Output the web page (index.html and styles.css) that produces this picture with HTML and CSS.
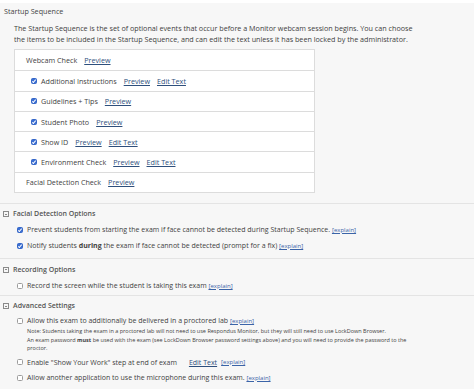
FILE: index.html
```html
<!DOCTYPE html>
<html>
<head>
<meta charset="utf-8">
<link rel="stylesheet" href="styles.css">
</head>
<body>
<div class="page">
  <section class="startup">
    <div class="title">Startup Sequence</div>
    <p class="desc">The Startup Sequence is the set of optional events that occur before a Monitor webcam session begins. You can choose<br>the items to be included in the Startup Sequence, and can edit the text unless it has been locked by the administrator.</p>
    <div class="seq">
      <div class="row plain"><span>Webcam Check</span><a href="#">Preview</a></div>
      <div class="row"><span class="cb on"></span><span>Additional Instructions</span><a href="#">Preview</a><a href="#">Edit Text</a></div>
      <div class="row"><span class="cb on"></span><span>Guidelines + Tips</span><a href="#">Preview</a></div>
      <div class="row"><span class="cb on"></span><span>Student Photo</span><a href="#">Preview</a></div>
      <div class="row"><span class="cb on"></span><span>Show ID</span><a href="#">Preview</a><a href="#">Edit Text</a></div>
      <div class="row"><span class="cb on"></span><span>Environment Check</span><a href="#">Preview</a><a href="#">Edit Text</a></div>
      <div class="row plain"><span>Facial Detection Check</span><a href="#">Preview</a></div>
    </div>
  </section>

  <section class="opt facial">
    <div class="head"><span class="tog"></span>Facial Detection Options</div>
    <div class="item"><span class="cb on"></span><span>Prevent students from starting the exam if face cannot be detected during Startup Sequence. <a class="ex" href="#">[explain]</a></span></div>
    <div class="item"><span class="cb on"></span><span>Notify students <b>during</b> the exam if face cannot be detected (prompt for a fix) <a class="ex" href="#">[explain]</a></span></div>
  </section>

  <section class="opt rec">
    <div class="head"><span class="tog"></span>Recording Options</div>
    <div class="item"><span class="cb"></span><span>Record the screen while the student is taking this exam <a class="ex" href="#">[explain]</a></span></div>
  </section>

  <section class="opt adv">
    <div class="head"><span class="tog"></span>Advanced Settings</div>
    <div class="item"><span class="cb"></span><span>Allow this exam to additionally be delivered in a proctored lab <a class="ex" href="#">[explain]</a></span></div>
    <p class="note">Note: Students taking the exam in a proctored lab will not need to use Respondus Monitor, but they will still need to use LockDown Browser.<br>An exam password <b>must</b> be used with the exam (see LockDown Browser password settings above) and you will need to provide the password to the<br>proctor.</p>
    <div class="item"><span class="cb"></span><span>Enable "Show Your Work" step at end of exam</span><a class="et" href="#">Edit Text</a><a class="ex" href="#">[explain]</a></div>
    <div class="item last"><span class="cb"></span><span>Allow another application to use the microphone during this exam. <a class="ex" href="#">[explain]</a></span></div>
  </section>
</div>
</body>
</html>
```

FILE: styles.css
```css
html, body {
  margin: 0;
  padding: 0;
  background: #ffffff;
}

body {
  font-family: "Open Sans", "Noto Sans", sans-serif;
  font-size: 7.2px;
  color: #3f3f3f;
}

.page {
  padding-top: 3px;
}

section {
  background: #f7f7f7;
  border-bottom: 1px solid #e4e4e4;
}

.startup {
  padding: 3px 0 10px 0;
}

.title {
  padding-left: 4px;
  line-height: 10px;
  color: #444;
}

.desc {
  margin: 7px 0 0 14px;
  line-height: 10.5px;
}

.seq {
  margin: 5px 0 0 14px;
  width: 299px;
  background: #ffffff;
  border: 1px solid #dcdcdc;
}

.row {
  display: flex;
  align-items: center;
  gap: 7px;
  height: 19.3px;
  padding-left: 16px;
  border-top: 1px solid #dcdcdc;
}

.row:first-child {
  border-top: none;
  height: 20.3px;
}

.row.plain {
  padding-left: 11px;
}

.row .cb {
  margin-right: -3px;
}

a {
  color: #2e4f7c;
  text-decoration: underline;
}

.cb {
  display: inline-block;
  flex: none;
  box-sizing: border-box;
  width: 6px;
  height: 6px;
  border: 1px solid #9c9c9c;
  border-radius: 1.5px;
  background: #ffffff;
  position: relative;
}

.cb.on {
  border-color: #3566c8;
  background: #3b6fd2;
}

.cb.on::after {
  content: "";
  position: absolute;
  left: 1.2px;
  top: 0.1px;
  width: 1.4px;
  height: 2.8px;
  border: solid #ffffff;
  border-width: 0 1px 1px 0;
  transform: rotate(40deg);
}

.opt {
  font-size: 7px;
  padding: 5px 0 4px 0;
}

.head {
  display: flex;
  align-items: center;
  line-height: 10px;
  padding-left: 3px;
  font-weight: 600;
  color: #555;
  margin-bottom: 2.5px;
}

.tog {
  box-sizing: border-box;
  width: 6px;
  height: 6px;
  border: 1px solid #8a8a8a;
  margin-right: 4px;
  position: relative;
}

.tog::after {
  content: "";
  position: absolute;
  left: 1px;
  right: 1px;
  top: 1.5px;
  height: 1px;
  background: #8a8a8a;
}

.item {
  display: flex;
  align-items: center;
  line-height: 15px;
  padding-left: 17px;
}

.item .cb {
  margin-right: 4px;
}

.ex {
  font-size: 6px;
  color: #3b64a8;
}

.item b, .note b {
  font-weight: 700;
}

.et {
  margin-left: 12px;
  margin-right: 4px;
}

.note {
  margin: -1.5px 0 2px 27px;
  font-size: 5.5px;
  line-height: 8.5px;
}

.rec {
  padding-top: 6px;
  padding-bottom: 1.5px;
}

.rec .head {
  margin-bottom: 3px;
}

.adv .head {
  margin-bottom: 1.5px;
}

.adv {
  border-bottom: none;
  padding-bottom: 6px;
}
```
